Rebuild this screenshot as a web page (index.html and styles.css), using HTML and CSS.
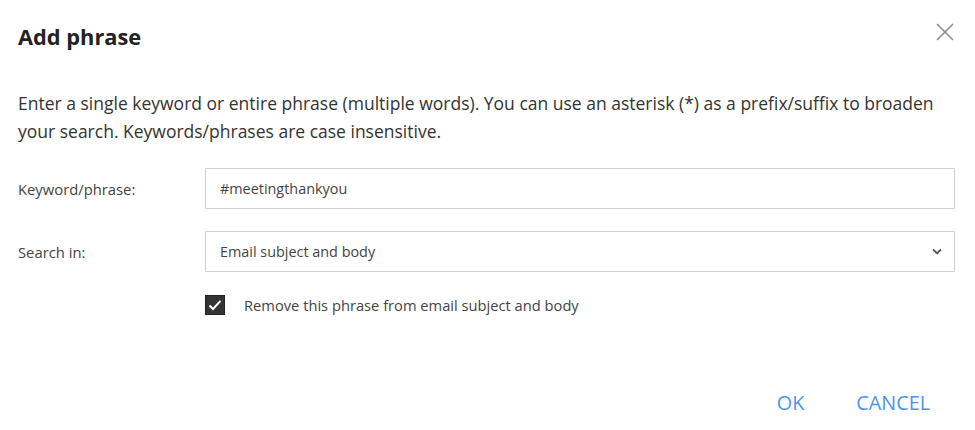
FILE: index.html
```html
<!DOCTYPE html>
<html>
<head>
<meta charset="utf-8">
<link rel="stylesheet" href="styles.css">
</head>
<body>
<div class="dialog">
  <div class="header">
    <h1 class="title">Add phrase</h1>
    <button class="close" aria-label="Close">
      <svg width="18" height="18" viewBox="0 0 18 18"><path d="M1 1 L17 17 M17 1 L1 17" stroke="#8a8a8a" stroke-width="1.6" fill="none"/></svg>
    </button>
  </div>
  <p class="desc">Enter a single keyword or entire phrase (multiple words). You can use an asterisk (*) as a prefix/suffix to broaden your search. Keywords/phrases are case insensitive.</p>
  <div class="form">
    <div class="row">
      <label class="label">Keyword/phrase:</label>
      <div class="field">#meetingthankyou</div>
    </div>
    <div class="row row2">
      <label class="label">Search in:</label>
      <div class="field select">
        <span>Email subject and body</span>
        <svg width="10" height="7" viewBox="0 0 10 7"><path d="M1 1.5 L5 5.2 L9 1.5" stroke="#555" stroke-width="1.8" fill="none"/></svg>
      </div>
    </div>
    <div class="check-row">
      <span class="checkbox">
        <svg width="14" height="12" viewBox="0 0 14 12"><path d="M1.5 6.5 L5 10 L12.5 1.8" stroke="#fff" stroke-width="2" fill="none"/></svg>
      </span>
      <span class="check-label">Remove this phrase from email subject and body</span>
    </div>
  </div>
  <div class="footer">
    <button class="btn">OK</button>
    <button class="btn">CANCEL</button>
  </div>
</div>
</body>
</html>
```
FILE: styles.css
```css
html, body {
  margin: 0;
  padding: 0;
  background: #fff;
}
body {
  font-family: "Open Sans", "Noto Sans", sans-serif;
  color: #333;
}
.dialog {
  width: 975px;
  height: 430px;
  box-sizing: border-box;
  padding: 0 20px 0 18px;
}
.header {
  display: flex;
  justify-content: space-between;
  align-items: flex-start;
  padding-top: 22px;
}
.title {
  margin: 0;
  font-size: 21.8px;
  font-weight: 700;
  color: #222;
  line-height: 30px;
}
.close {
  border: 0;
  background: none;
  padding: 0;
  margin: 1px 1px 0 0;
  width: 18px;
  height: 18px;
  cursor: pointer;
}
.desc {
  margin: 37px 0 0 0;
  font-size: 17.5px;
  line-height: 28px;
  color: #333;
}
.form {
  margin-top: 23px;
}
.row {
  display: flex;
  align-items: center;
}
.row2 {
  margin-top: 22px;
}
.label {
  width: 187px;
  font-size: 14.8px;
  color: #444;
}
.field {
  flex: 1;
  height: 41px;
  box-sizing: border-box;
  border: 1px solid #d0d0d0;
  padding: 0 14px;
  display: flex;
  align-items: center;
  font-size: 14.4px;
  color: #444;
}
.select {
  justify-content: space-between;
}
.select svg {
  margin-right: -2px;
}
.check-row {
  display: flex;
  align-items: center;
  margin-top: 23px;
  margin-left: 187px;
}
.checkbox {
  width: 20px;
  height: 20px;
  box-sizing: border-box;
  background: #333;
  border: 1px solid #222;
  display: flex;
  align-items: center;
  justify-content: center;
}
.check-label {
  margin-left: 19px;
  font-size: 14.7px;
  color: #444;
}
.footer {
  display: flex;
  justify-content: flex-end;
  gap: 52px;
  margin-top: 74px;
  padding-right: 25px;
}
.btn {
  border: 0;
  background: none;
  padding: 0;
  font-family: "Open Sans", "Noto Sans", sans-serif;
  font-size: 19.8px;
  color: #4a94f0;
  cursor: pointer;
}
```
